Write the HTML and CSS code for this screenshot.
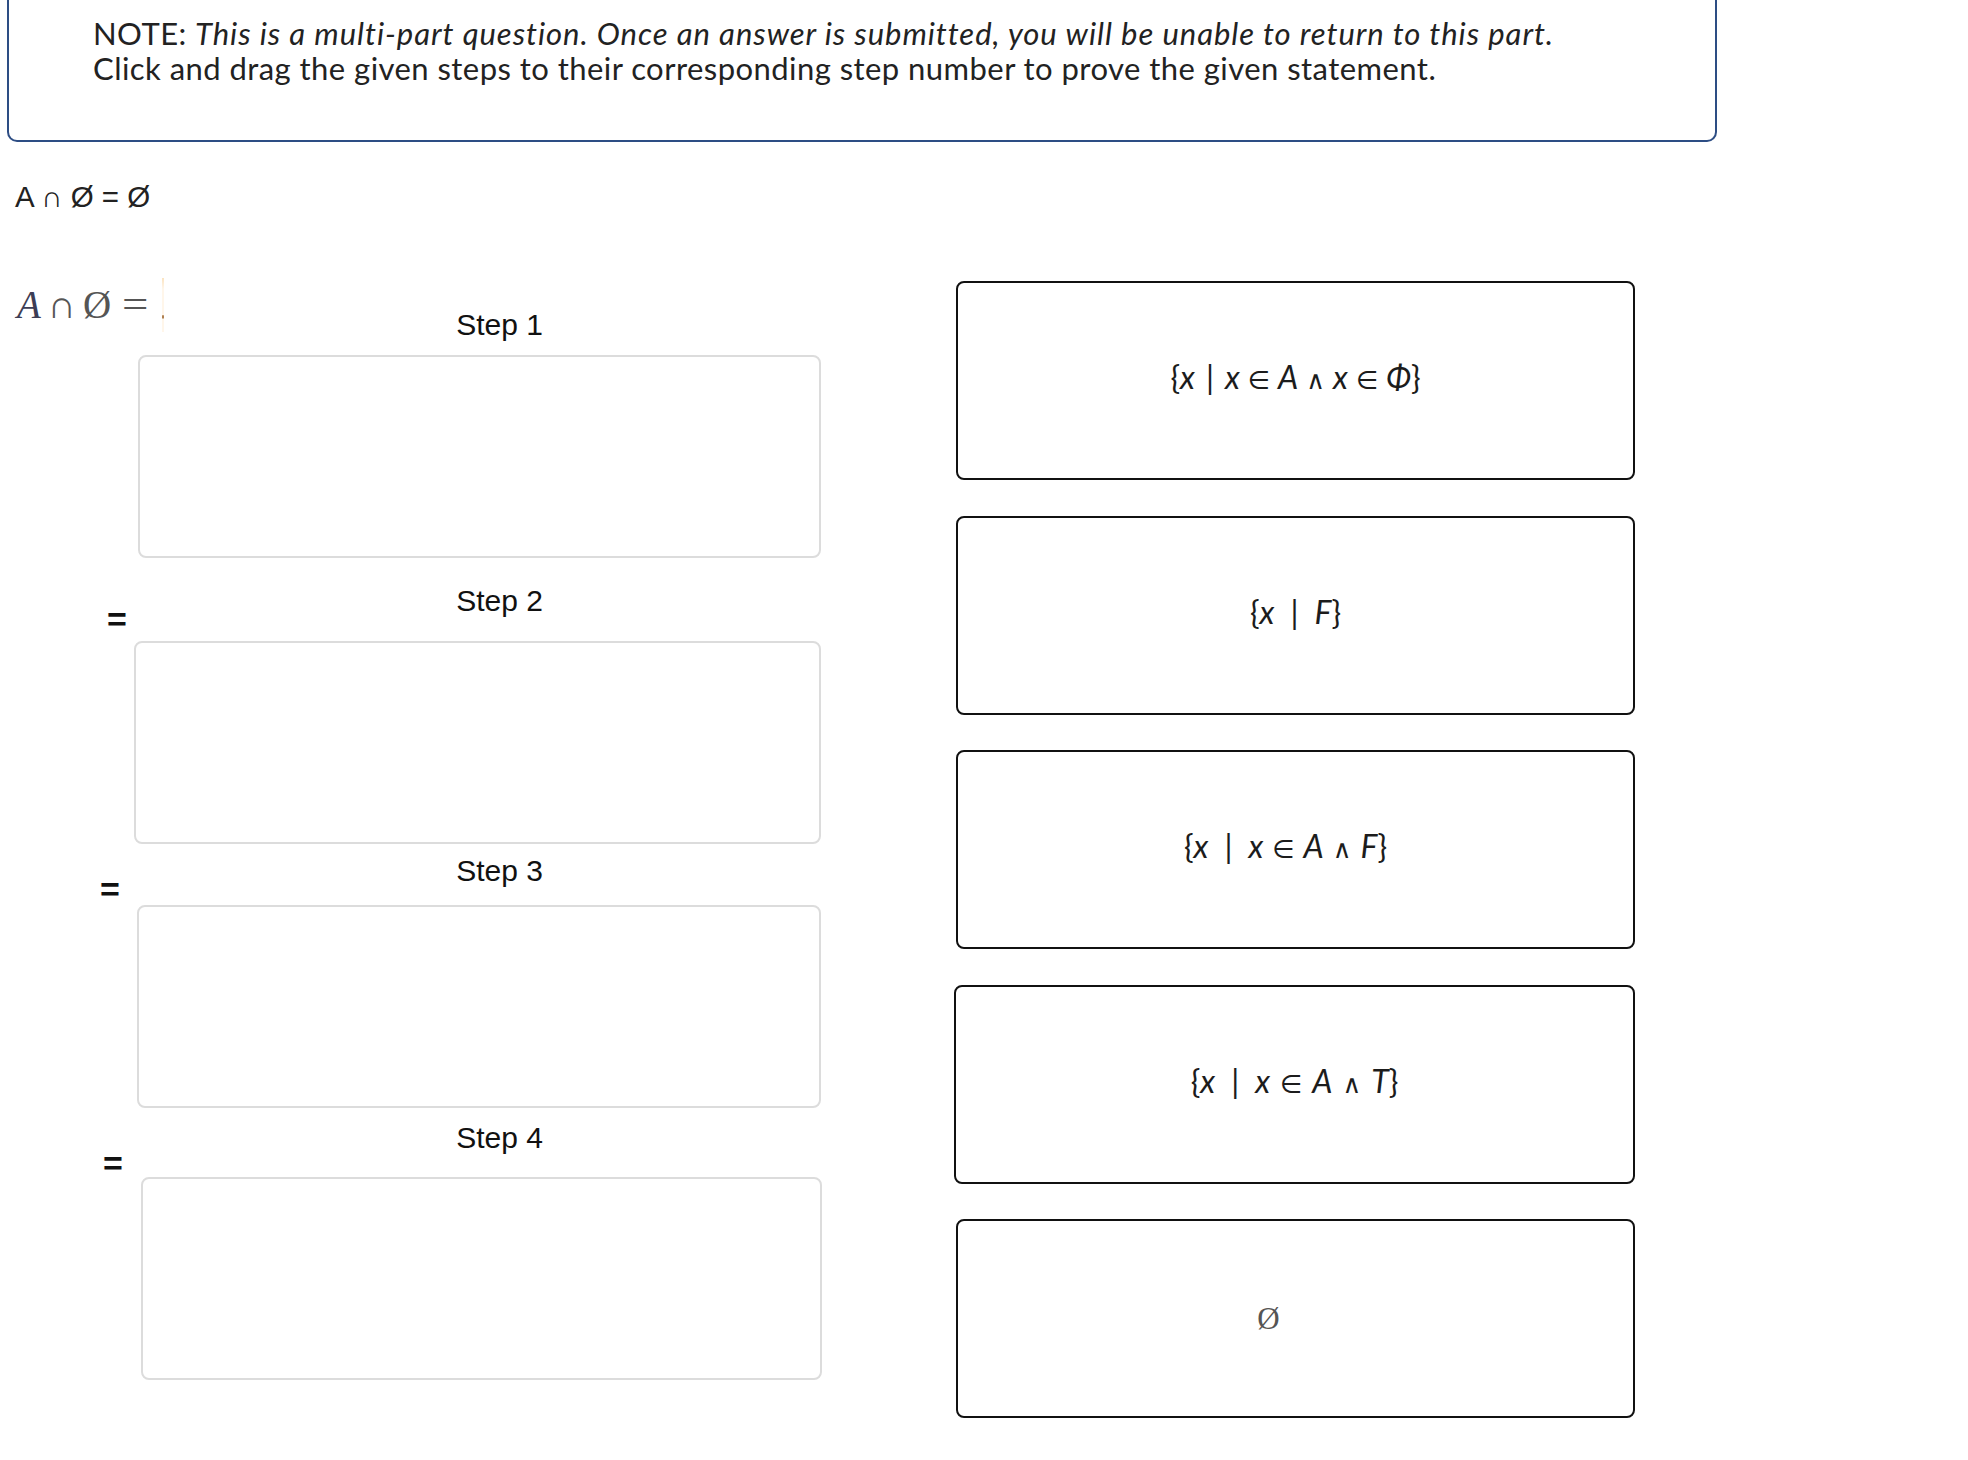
FILE: index.html
```html
<!DOCTYPE html>
<html lang="en">
<head>
<meta charset="utf-8">
<title>Proof steps</title>
<link rel="stylesheet" href="styles.css">
</head>
<body>
<div class="note">
  <p class="note-line">NOTE: <em>This is a multi-part question. Once an answer is submitted, you will be unable to return to this part.</em></p>
  <p class="note-line">Click and drag the given steps to their corresponding step number to prove the given statement.</p>
</div>

<div class="statement">A ∩ Ø = Ø</div>

<div class="workspace">
  <div class="proof">
    <div class="step step-1">
      <div class="eq"><span class="lhs"><i>A</i><span class="gap">∩</span>Ø<span class="gap eq-gap">=</span><span class="mark"></span></span></div>
      <div class="step-body">
        <div class="step-label">Step 1</div>
        <div class="slot"></div>
      </div>
    </div>
    <div class="step step-2">
      <div class="eq"><span class="eq-sign">=</span></div>
      <div class="step-body">
        <div class="step-label">Step 2</div>
        <div class="slot"></div>
      </div>
    </div>
    <div class="step step-3">
      <div class="eq"><span class="eq-sign">=</span></div>
      <div class="step-body">
        <div class="step-label">Step 3</div>
        <div class="slot"></div>
      </div>
    </div>
    <div class="step step-4">
      <div class="eq"><span class="eq-sign">=</span></div>
      <div class="step-body">
        <div class="step-label">Step 4</div>
        <div class="slot"></div>
      </div>
    </div>
  </div>

  <div class="cards">
    <div class="card card-1"><span class="expr">{<i>x</i><span class="bar">|</span><i>x</i><span class="op">∈</span><i>A</i><span class="op">∧</span><i>x</i><span class="op">∈</span><i class="phi">Φ</i>}</span></div>
    <div class="card card-2"><span class="expr">{<i>x</i><span class="bar">|</span><i>F</i>}</span></div>
    <div class="card card-3"><span class="expr">{<i>x</i><span class="bar">|</span><i>x</i><span class="op">∈</span><i>A</i><span class="op">∧</span><i>F</i>}</span></div>
    <div class="card card-4"><span class="expr">{<i>x</i><span class="bar">|</span><i>x</i><span class="op">∈</span><i>A</i><span class="op">∧</span><i>T</i>}</span></div>
    <div class="card card-5"><span class="empty-set">Ø</span></div>
  </div>
</div>
</body>
</html>
```

FILE: styles.css
```css
html, body {
  margin: 0;
  padding: 0;
  background: #ffffff;
}

body {
  color: #222;
  font-family: "Liberation Sans", Arial, sans-serif;
}

/* ---------- note box ---------- */
.note {
  margin-left: 7px;
  width: 1710px;
  height: 142px;
  box-sizing: border-box;
  border: 2px solid #2d4d84;
  border-top: 0;
  border-radius: 0 0 10px 10px;
  padding: 16px 0 0 84px;
  font-family: "Lato", "Open Sans", sans-serif;
  font-size: 31px;
  line-height: 35px;
  letter-spacing: 0.45px;
  color: #222;
}

.note-line {
  margin: 0;
  white-space: nowrap;
}

.note-line em {
  letter-spacing: 0.95px;
}

/* ---------- statement ---------- */
.statement {
  margin: 38px 0 0 15px;
  font-family: "Liberation Sans", Arial, sans-serif;
  font-size: 29.5px;
  line-height: 34px;
  color: #222;
}

/* ---------- workspace ---------- */
.workspace {
  display: flex;
  margin-top: 67px;
}

.proof {
  width: 956px;
  flex: none;
}

.step {
  display: flex;
}

.eq {
  width: 138px;
  flex: none;
  box-sizing: border-box;
  white-space: nowrap;
}

.step-body {
  width: 683px;
  flex: none;
}

.step-label {
  font-family: "Liberation Sans", Arial, sans-serif;
  font-size: 30px;
  line-height: 36px;
  text-align: center;
  padding-left: 40px;
  color: #111;
}

.slot {
  height: 203px;
  box-sizing: border-box;
  border: 2px solid #dcdcdc;
  border-radius: 8px;
  background: #fff;
}

.eq-sign {
  display: block;
  font-family: "Liberation Sans", Arial, sans-serif;
  font-weight: bold;
  font-size: 34px;
  line-height: 36px;
  color: #111;
}

/* step-specific spacing, as laid out in the original */
.step-1 { padding-top: 26px; }
.step-1 .slot { margin-top: 12px; }
.step-1 .eq { padding: 0 0 0 17px; margin-top: -29px; }

.step-2 { margin-top: 25px; }
.step-2 .slot { margin-top: 22px; margin-left: -4px; }
.step-2 .eq { padding: 18px 0 0 107px; }

.step-3 { margin-top: 9px; }
.step-3 .slot { margin-top: 16px; margin-left: -1px; }
.step-3 .eq { padding: 18px 0 0 100px; }

.step-4 { margin-top: 12px; }
.step-4 .slot { margin-top: 21px; margin-left: 3px; width: 681px; }
.step-4 .eq { padding: 25px 0 0 103px; }

/* image-like left-hand side */
.lhs {
  display: block;
  font-family: "Liberation Serif", "DejaVu Serif", serif;
  font-size: 39px;
  line-height: 44px;
  color: #555;
}

.lhs i {
  font-style: italic;
  color: #3d3d55;
}

.lhs .gap {
  margin: 0 7px;
}

.lhs .eq-gap {
  display: inline-block;
  margin: 0 0 0 11px;
  transform: scaleX(1.2);
  transform-origin: left center;
}

.mark {
  display: inline-block;
  width: 2px;
  height: 54px;
  margin-left: 18px;
  vertical-align: -14px;
  background: linear-gradient(#fbe3c0 0%, #fff6ea 20%, #fff6ea 68%, #b08050 70%, #b08050 74%, #fff6ea 76%, #fff6ea 100%);
}

/* ---------- answer cards ---------- */
.cards {
  display: flex;
  flex-direction: column;
  gap: 35.5px;
  width: 679px;
  flex: none;
}

.card {
  height: 199px;
  box-sizing: border-box;
  border: 2px solid #111;
  border-radius: 8px;
  display: flex;
  align-items: center;
  justify-content: center;
  background: #fff;
}

.card-4 {
  margin-left: -2px;
}

.expr {
  font-family: "Lato", "DejaVu Sans", sans-serif;
  font-size: 32px;
  color: #1c1c1c;
  white-space: nowrap;
  margin-bottom: 8px;
}

.expr i {
  font-style: italic;
}

.expr .op {
  font-size: 0.8em;
  margin: 0 8px;
}

.expr .bar {
  margin: 0 11px;
}

.card-2 .bar { margin: 0 16px; }
.card-3 .bar { margin: 0 16px; }
.card-3 .op { margin: 0 9px; }
.card-3 .expr { margin-right: 20px; }
.card-4 .bar { margin: 0 16px; }
.card-4 .op { margin: 0 10px; }

.empty-set {
  font-family: "Liberation Serif", "DejaVu Serif", serif;
  font-size: 31px;
  color: #555;
  margin-right: 54px;
}
```
